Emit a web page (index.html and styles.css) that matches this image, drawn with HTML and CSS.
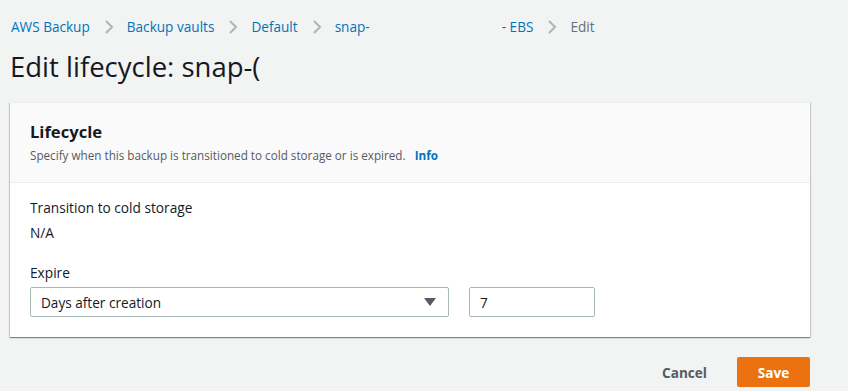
FILE: index.html
```html
<!DOCTYPE html>
<html>
<head>
<meta charset="utf-8">
<link rel="stylesheet" href="styles.css">
</head>
<body>
<nav class="crumbs">
  <a class="crumb">AWS Backup</a>
  <span class="sep"><svg width="10" height="16" viewBox="0 0 10 16"><path d="M2 2 L8 8 L2 14" fill="none" stroke="#aab7b8" stroke-width="2"/></svg></span>
  <a class="crumb">Backup vaults</a>
  <span class="sep"><svg width="10" height="16" viewBox="0 0 10 16"><path d="M2 2 L8 8 L2 14" fill="none" stroke="#aab7b8" stroke-width="2"/></svg></span>
  <a class="crumb">Default</a>
  <span class="sep"><svg width="10" height="16" viewBox="0 0 10 16"><path d="M2 2 L8 8 L2 14" fill="none" stroke="#aab7b8" stroke-width="2"/></svg></span>
  <a class="crumb">snap-<span class="redact"></span>- EBS</a>
  <span class="sep"><svg width="10" height="16" viewBox="0 0 10 16"><path d="M2 2 L8 8 L2 14" fill="none" stroke="#aab7b8" stroke-width="2"/></svg></span>
  <span class="crumb current">Edit</span>
</nav>
<h1 class="title">Edit lifecycle: snap-(</h1>
<section class="card">
  <header class="card-head">
    <h2 class="card-title">Lifecycle</h2>
    <p class="card-desc">Specify when this backup is transitioned to cold storage or is expired. <a class="info">Info</a></p>
  </header>
  <div class="card-body">
    <div class="field">
      <div class="label">Transition to cold storage</div>
      <div class="value">N/A</div>
    </div>
    <div class="field">
      <div class="label">Expire</div>
      <div class="controls">
        <div class="select">
          <span>Days after creation</span>
          <svg width="12" height="8" viewBox="0 0 12 8"><path d="M0 0 H12 L6 8 Z" fill="#545b64"/></svg>
        </div>
        <div class="input">7</div>
      </div>
    </div>
  </div>
</section>
<div class="actions">
  <a class="cancel">Cancel</a>
  <button class="save">Save</button>
</div>
</body>
</html>
```
FILE: styles.css
```css
* { box-sizing: border-box; }
body {
  margin: 0;
  background: #f2f3f3;
  font-family: "Open Sans", "Noto Sans", Arial, sans-serif;
  color: #16191f;
  width: 848px;
  height: 391px;
  overflow: hidden;
}
.crumbs {
  display: flex;
  align-items: center;
  padding: 16px 0 0 11px;
  height: 37px;
  font-size: 13.6px;
}
.crumb { color: #0073bb; text-decoration: none; }
.crumb.current { color: #687078; }
.redact { display: inline-block; width: 132px; }
.sep { display: flex; align-items: center; margin: 0 13px 0 14px; }
.title {
  margin: 0;
  padding: 12px 0 0 10px;
  font-size: 27.5px;
  font-weight: 400;
  line-height: 36px;
  height: 65px;
  width: 270px;
  white-space: nowrap;
  overflow: hidden;
}
.card {
  margin: 0 38px 0 10px;
  background: #fff;
  box-shadow: 0 1px 1px 0 rgba(0,28,36,.3), 1px 1px 1px 0 rgba(0,28,36,.15), -1px 1px 1px 0 rgba(0,28,36,.15);
  border-top: 1px solid #eaeded;
}
.card-head {
  background: #fafafa;
  border-bottom: 1px solid #eaeded;
  padding: 17px 20px 0 20px;
  height: 80px;
}
.card-title {
  margin: 0;
  font-size: 16.6px;
  font-weight: 700;
  line-height: 24px;
}
.card-desc {
  margin: 2px 0 0;
  font-size: 11.7px;
  color: #545b64;
  line-height: 18px;
}
.info {
  color: #0073bb;
  font-weight: 700;
  margin-left: 6px;
}
.card-body { padding: 15px 20px 20px; }
.field + .field { margin-top: 20px; }
.label { font-size: 13.7px; line-height: 20px; }
.value { font-size: 13.7px; line-height: 20px; margin-top: 5px; }
.controls { display: flex; gap: 20px; margin-top: 4px; }
.select {
  width: 419px;
  height: 30px;
  border: 1px solid #aab7b8;
  border-radius: 2px;
  display: flex;
  align-items: center;
  justify-content: space-between;
  padding: 0 12px 0 10px;
  font-size: 13.6px;
}
.input {
  width: 126px;
  height: 30px;
  border: 1px solid #aab7b8;
  border-radius: 2px;
  display: flex;
  align-items: center;
  padding: 0 10px;
  font-size: 13.6px;
}
.actions {
  display: flex;
  justify-content: flex-end;
  align-items: center;
  margin: 20px 38px 0 0;
  gap: 30px;
}
.cancel { font-size: 13.6px; font-weight: 700; color: #545b64; }
.save {
  background: #ec7211;
  color: #fff;
  border: none;
  border-radius: 2px;
  font-family: inherit;
  font-size: 13.6px;
  font-weight: 700;
  width: 73px;
  height: 30px;
}
```
